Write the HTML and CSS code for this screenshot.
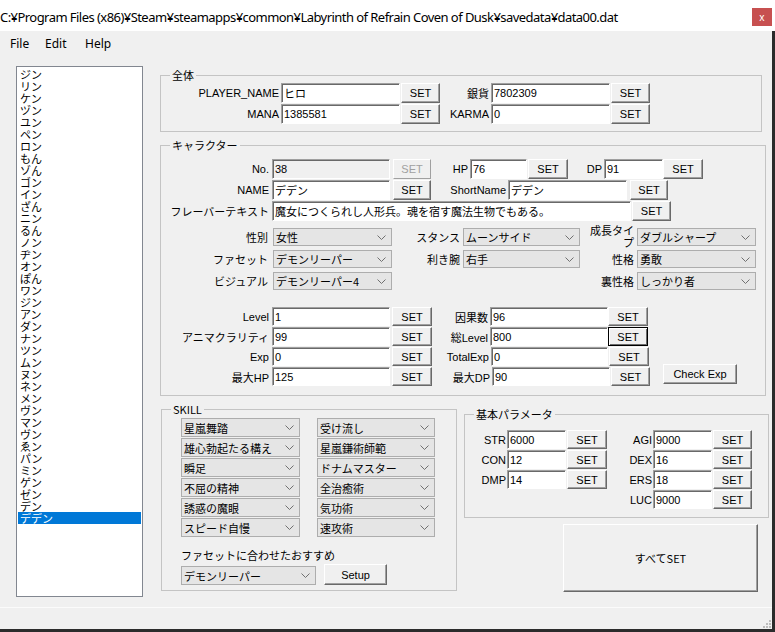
FILE: index.html
```html
<!DOCTYPE html>
<html lang="ja">
<head>
    <meta charset="UTF-8">
    <title>data00.dat</title>
    <link rel="stylesheet" href="styles.css">
</head>
<body>
    <div class="titlebar">
        <div class="title">C:¥Program Files (x86)¥Steam¥steamapps¥common¥Labyrinth of Refrain Coven of Dusk¥savedata¥data00.dat</div>
        <div class="close">x</div>
    </div>

    <div class="window">
        <div class="menubar">
            <span class="menu-file">File</span>
            <span class="menu-edit">Edit</span>
            <span>Help</span>
        </div>

        <div class="main">
            <!-- キャラ一覧 -->
            <div class="listbox">
                <div>ジン</div><div>リン</div><div>ケン</div><div>ヅン</div><div>ユン</div>
                <div>ペン</div><div>ロン</div><div>もん</div><div>ゾん</div><div>ゴン</div>
                <div>イン</div><div>ざん</div><div>ニン</div><div>るん</div><div>ノン</div>
                <div>ヂン</div><div>オン</div><div>ぽん</div><div>ワン</div><div>ジン</div>
                <div>アン</div><div>ダン</div><div>ナン</div><div>ツン</div><div>ムン</div>
                <div>ヌン</div><div>ネン</div><div>メン</div><div>ヴン</div><div>マン</div>
                <div>ヴン</div><div>ゑン</div><div>パン</div><div>ミン</div><div>ゲン</div>
                <div>ゼン</div><div>デン</div><div class="selected">デデン</div>
            </div>

            <div class="form">
                <!-- 全体 -->
                <div class="group group-all">
                    <span class="group-title">全体</span>
                    <div class="grid-all">
                        <span class="lbl">PLAYER_NAME</span>
                        <span class="tb">ヒロ</span>
                        <button class="btn ml1">SET</button>
                        <span class="lbl">銀貨</span>
                        <span class="tb">7802309</span>
                        <button class="btn ml1">SET</button>

                        <span class="lbl">MANA</span>
                        <span class="tb">1385581</span>
                        <button class="btn ml1">SET</button>
                        <span class="lbl">KARMA</span>
                        <span class="tb">0</span>
                        <button class="btn ml1">SET</button>
                    </div>
                </div>

                <!-- キャラクター -->
                <div class="group group-chara">
                    <span class="group-title">キャラクター</span>

                    <div class="row">
                        <span class="lbl w110">No.</span>
                        <span class="tb disabled w118 ml1">38</span>
                        <button class="btn w38 ml3" disabled>SET</button>
                        <span class="lbl w39">HP</span>
                        <span class="tb w57">76</span>
                        <button class="btn w40 ml1">SET</button>
                        <span class="lbl w36">DP</span>
                        <span class="tb w59">91</span>
                        <button class="btn w40">SET</button>
                    </div>
                    <div class="row">
                        <span class="lbl w110">NAME</span>
                        <span class="tb w118 ml1">デデン</span>
                        <button class="btn w38 ml3">SET</button>
                        <span class="lbl w77">ShortName</span>
                        <span class="tb w119">デデン</span>
                        <button class="btn w38 ml3">SET</button>
                    </div>
                    <div class="row">
                        <span class="lbl w110">フレーバーテキスト</span>
                        <span class="tb w359 ml1">魔女につくられし人形兵。魂を宿す魔法生物でもある。</span>
                        <button class="btn w39 ml1">SET</button>
                    </div>

                    <div class="grid-combo">
                        <span class="lbl">性別</span>
                        <span class="combo ml2">女性<svg viewBox="0 0 9 5"><polyline points="0.5,0.5 4.5,4.5 8.5,0.5"/></svg></span>
                        <span class="lbl">スタンス</span>
                        <span class="combo">ムーンサイド<svg viewBox="0 0 9 5"><polyline points="0.5,0.5 4.5,4.5 8.5,0.5"/></svg></span>
                        <span class="lbl wrap">成長タイプ</span>
                        <span class="combo">ダブルシャープ<svg viewBox="0 0 9 5"><polyline points="0.5,0.5 4.5,4.5 8.5,0.5"/></svg></span>

                        <span class="lbl">ファセット</span>
                        <span class="combo ml2">デモンリーパー<svg viewBox="0 0 9 5"><polyline points="0.5,0.5 4.5,4.5 8.5,0.5"/></svg></span>
                        <span class="lbl">利き腕</span>
                        <span class="combo">右手<svg viewBox="0 0 9 5"><polyline points="0.5,0.5 4.5,4.5 8.5,0.5"/></svg></span>
                        <span class="lbl">性格</span>
                        <span class="combo">勇敢<svg viewBox="0 0 9 5"><polyline points="0.5,0.5 4.5,4.5 8.5,0.5"/></svg></span>

                        <span class="lbl">ビジュアル</span>
                        <span class="combo ml2">デモンリーパー4<svg viewBox="0 0 9 5"><polyline points="0.5,0.5 4.5,4.5 8.5,0.5"/></svg></span>
                        <span></span>
                        <span></span>
                        <span class="lbl">裏性格</span>
                        <span class="combo">しっかり者<svg viewBox="0 0 9 5"><polyline points="0.5,0.5 4.5,4.5 8.5,0.5"/></svg></span>
                    </div>

                    <div class="stats">
                        <div class="row">
                            <span class="lbl w110">Level</span>
                            <span class="tb w118 ml1">1</span>
                            <button class="btn w40 ml2">SET</button>
                            <span class="lbl w58">因果数</span>
                            <span class="tb w118">96</span>
                            <button class="btn w40">SET</button>
                        </div>
                        <div class="row">
                            <span class="lbl w110">アニマクラリティ</span>
                            <span class="tb w118 ml1">99</span>
                            <button class="btn w40 ml2">SET</button>
                            <span class="lbl w58">総Level</span>
                            <span class="tb w118">800</span>
                            <button class="btn w40 focus">SET</button>
                        </div>
                        <div class="row">
                            <span class="lbl w110">Exp</span>
                            <span class="tb w118 ml1">0</span>
                            <button class="btn w40 ml2">SET</button>
                            <span class="lbl w59">TotalExp</span>
                            <span class="tb w117">0</span>
                            <button class="btn w40 ml1">SET</button>
                        </div>
                        <div class="row">
                            <span class="lbl w110">最大HP</span>
                            <span class="tb w118 ml1">125</span>
                            <button class="btn w40 ml2">SET</button>
                            <span class="lbl w60">最大DP</span>
                            <span class="tb w118">90</span>
                            <button class="btn w39 ml1">SET</button>
                            <button class="btn check">Check Exp</button>
                        </div>
                    </div>
                </div>

                <div class="lower">
                    <!-- SKILL -->
                    <div class="group group-skill">
                        <span class="group-title">SKILL</span>
                        <div class="grid-skill">
                            <span class="combo">星嵐舞踏<svg viewBox="0 0 9 5"><polyline points="0.5,0.5 4.5,4.5 8.5,0.5"/></svg></span>
                            <span class="combo">受け流し<svg viewBox="0 0 9 5"><polyline points="0.5,0.5 4.5,4.5 8.5,0.5"/></svg></span>
                            <span class="combo">雄心勃起たる構え<svg viewBox="0 0 9 5"><polyline points="0.5,0.5 4.5,4.5 8.5,0.5"/></svg></span>
                            <span class="combo">星嵐鎌術師範<svg viewBox="0 0 9 5"><polyline points="0.5,0.5 4.5,4.5 8.5,0.5"/></svg></span>
                            <span class="combo">瞬足<svg viewBox="0 0 9 5"><polyline points="0.5,0.5 4.5,4.5 8.5,0.5"/></svg></span>
                            <span class="combo">ドナムマスター<svg viewBox="0 0 9 5"><polyline points="0.5,0.5 4.5,4.5 8.5,0.5"/></svg></span>
                            <span class="combo">不屈の精神<svg viewBox="0 0 9 5"><polyline points="0.5,0.5 4.5,4.5 8.5,0.5"/></svg></span>
                            <span class="combo">全治癒術<svg viewBox="0 0 9 5"><polyline points="0.5,0.5 4.5,4.5 8.5,0.5"/></svg></span>
                            <span class="combo">誘惑の魔眼<svg viewBox="0 0 9 5"><polyline points="0.5,0.5 4.5,4.5 8.5,0.5"/></svg></span>
                            <span class="combo">気功術<svg viewBox="0 0 9 5"><polyline points="0.5,0.5 4.5,4.5 8.5,0.5"/></svg></span>
                            <span class="combo">スピード自慢<svg viewBox="0 0 9 5"><polyline points="0.5,0.5 4.5,4.5 8.5,0.5"/></svg></span>
                            <span class="combo">速攻術<svg viewBox="0 0 9 5"><polyline points="0.5,0.5 4.5,4.5 8.5,0.5"/></svg></span>
                        </div>
                        <div class="recommend-label">ファセットに合わせたおすすめ</div>
                        <div class="recommend">
                            <span class="combo">デモンリーパー<svg viewBox="0 0 9 5"><polyline points="0.5,0.5 4.5,4.5 8.5,0.5"/></svg></span>
                            <button class="btn setup">Setup</button>
                        </div>
                    </div>

                    <div class="side">
                        <!-- 基本パラメータ -->
                        <div class="group group-param">
                            <span class="group-title">基本パラメータ</span>
                            <div class="grid-param">
                                <span class="lbl">STR</span>
                                <span class="tb">6000</span>
                                <button class="btn ml1">SET</button>
                                <span class="lbl">AGI</span>
                                <span class="tb">9000</span>
                                <button class="btn ml1">SET</button>

                                <span class="lbl">CON</span>
                                <span class="tb">12</span>
                                <button class="btn ml1">SET</button>
                                <span class="lbl">DEX</span>
                                <span class="tb">16</span>
                                <button class="btn ml1">SET</button>

                                <span class="lbl">DMP</span>
                                <span class="tb">14</span>
                                <button class="btn ml1">SET</button>
                                <span class="lbl">ERS</span>
                                <span class="tb">18</span>
                                <button class="btn ml1">SET</button>

                                <span></span><span></span><span></span>
                                <span class="lbl">LUC</span>
                                <span class="tb">9000</span>
                                <button class="btn ml1">SET</button>
                            </div>
                        </div>
                        <button class="btn setall">すべてSET</button>
                    </div>
                </div>
            </div>
        </div>

        <div class="statusbar">
            <svg class="grip" viewBox="0 0 10 10">
                <rect x="8" y="2" width="2" height="2"/>
                <rect x="5" y="5" width="2" height="2"/><rect x="8" y="5" width="2" height="2"/>
                <rect x="2" y="8" width="2" height="2"/><rect x="5" y="8" width="2" height="2"/><rect x="8" y="8" width="2" height="2"/>
            </svg>
        </div>
    </div>
</body>
</html>
```

FILE: styles.css
```css
* {
    box-sizing: border-box;
}

body {
    margin: 0;
    width: 775px;
    height: 632px;
    overflow: hidden;
    background: #f0f0f0;
    color: #000;
    font-family: "Liberation Sans", "Noto Sans CJK JP", sans-serif;
    font-size: 11px;
}

/* タイトルバー */
.titlebar {
    height: 31px;
    background: #fff;
    display: flex;
    justify-content: space-between;
    align-items: center;
    padding-top: 3px;
    font-family: "Noto Sans", "Noto Sans CJK JP", sans-serif;
    font-size: 13px;
    letter-spacing: -0.55px;
}

.close {
    width: 20px;
    height: 18px;
    margin-right: 3px;
    background: #c75050;
    color: #fff;
    font-size: 10px;
    letter-spacing: 0;
    display: flex;
    align-items: center;
    justify-content: center;
}

.window {
    height: 601px;
    display: flex;
    flex-direction: column;
    border-right: 3px solid #2b2b2b;
    border-bottom: 3px solid #2b2b2b;
}

.menubar {
    height: 27px;
    display: flex;
    align-items: center;
    padding-left: 10px;
    padding-bottom: 2px;
    font-family: "Noto Sans", sans-serif;
    font-size: 12px;
}

.menu-file { width: 35px; }
.menu-edit { width: 40px; }

.main {
    display: flex;
    height: 549px;
    padding: 8px 0 0 16px;
}

/* リスト */
.listbox {
    width: 127px;
    height: 531px;
    background: #fff;
    border: 1px solid #828790;
    padding: 1px;
    font-family: "Noto Sans CJK JP", sans-serif;
    font-size: 11px;
    line-height: 12px;
}

.listbox div {
    height: 12px;
    padding-left: 2px;
    white-space: nowrap;
}

.listbox .selected {
    background: #0078d7;
    color: #fff;
}

.form {
    margin-left: 17px;
    display: flex;
    flex-direction: column;
}

/* グループボックス */
.group {
    position: relative;
    border: 1px solid #c4c4c4;
}

.group-title {
    position: absolute;
    top: -8px;
    left: 9px;
    padding: 0 2px;
    line-height: 14px;
    background: #f0f0f0;
    font-family: "Noto Sans CJK JP", sans-serif;
}

.group-all {
    margin-top: 9px;
    width: 602px;
    height: 57px;
    padding-top: 7px;
}

.grid-all {
    display: grid;
    grid-template-columns: 120px 119px 40px 51px 119px 40px;
    grid-auto-rows: 20px;
    row-gap: 1px;
}

.group-chara {
    margin-top: 13px;
    width: 606px;
    height: 251px;
    padding-top: 13px;
}

.row {
    display: flex;
    height: 20px;
    margin-bottom: 1px;
}

.grid-combo {
    display: grid;
    grid-template-columns: 110px 121px 71px 117px 57px 119px;
    grid-auto-rows: 18px;
    row-gap: 4px;
    margin-top: 7px;
}

.stats {
    margin-top: 17px;
}

.stats .row {
    height: 19px;
}

/* 共通パーツ */
.lbl {
    display: flex;
    align-items: center;
    justify-content: flex-end;
    padding-right: 2px;
    white-space: nowrap;
    flex: none;
}

.lbl.wrap {
    white-space: normal;
    text-align: right;
    line-height: 12px;
    padding-right: 3px;
}

.grid-combo .lbl {
    padding-right: 3px;
}

.tb {
    display: flex;
    align-items: center;
    flex: none;
    background: #fff;
    border: 1px solid;
    border-color: #a0a0a0 #fff #fff #a0a0a0;
    box-shadow: inset 1px 1px #696969;
    padding-left: 2px;
    white-space: nowrap;
    overflow: hidden;
}

.tb.disabled {
    background: #f0f0f0;
}

.btn {
    flex: none;
    margin: 0;
    padding: 0;
    background: #f0f0f0;
    border: 1px solid;
    border-color: #fff #696969 #696969 #fff;
    box-shadow: inset -1px -1px #a0a0a0;
    font-family: "Liberation Sans", "Noto Sans CJK JP", sans-serif;
    font-size: 11px;
    color: #000;
}

.btn:disabled {
    color: #a0a0a0;
    border-color: #fff #a0a0a0 #a0a0a0 #fff;
    box-shadow: none;
}

.btn.focus {
    border-color: #000;
    box-shadow: inset 1px 1px #fff, inset -1px -1px #696969;
}

.combo {
    display: flex;
    align-items: center;
    justify-content: space-between;
    flex: none;
    background: #e5e5e5;
    border: 1px solid #adadad;
    padding-left: 2px;
    padding-right: 5px;
    font-family: "Noto Sans CJK JP", sans-serif;
    white-space: nowrap;
}

.combo svg {
    width: 9px;
    height: 5px;
    fill: none;
    stroke: #707070;
    stroke-width: 1;
}

.check {
    width: 74px;
    height: 20px;
    margin-left: 13px;
    margin-top: -3px;
}

.w36 { width: 36px; }
.w38 { width: 38px; }
.w39 { width: 39px; }
.w40 { width: 40px; }
.w57 { width: 57px; }
.w58 { width: 58px; }
.w59 { width: 59px; }
.w60 { width: 60px; }
.w77 { width: 77px; }
.w110 { width: 110px; }
.w117 { width: 117px; }
.w118 { width: 118px; }
.w119 { width: 119px; }
.w359 { width: 359px; }
.ml1 { margin-left: 1px; }
.ml2 { margin-left: 2px; }
.ml3 { margin-left: 3px; }

/* 下段 */
.lower {
    display: flex;
    align-items: flex-start;
    margin-top: 13px;
}

.group-skill {
    margin-left: 1px;
    width: 296px;
    height: 182px;
    padding: 8px 0 0 19px;
}

.grid-skill {
    display: grid;
    grid-template-columns: 119px 118px;
    column-gap: 17px;
    grid-auto-rows: 19px;
    row-gap: 1px;
}

.recommend-label {
    margin-top: 12px;
    line-height: 12px;
    font-family: "Noto Sans CJK JP", sans-serif;
}

.recommend {
    display: flex;
    align-items: flex-end;
    margin-top: 3px;
}

.recommend .combo {
    width: 135px;
    height: 19px;
}

.setup {
    width: 63px;
    height: 21px;
    margin-left: 8px;
}

.side {
    display: flex;
    flex-direction: column;
    margin-left: 7px;
    margin-top: 5px;
}

.group-param {
    width: 305px;
    height: 104px;
    padding-top: 15px;
}

.grid-param {
    display: grid;
    grid-template-columns: 42px 59px 41px 46px 59px 40px;
    grid-auto-rows: 19px;
    row-gap: 1px;
}

.grid-param .lbl {
    padding-right: 1px;
}

.setall {
    width: 195px;
    height: 68px;
    margin: 6px 0 0 99px;
    font-family: "Noto Sans CJK JP", sans-serif;
}

/* ステータスバー */
.statusbar {
    flex: 1;
    border-top: 1px solid #fbfbfb;
    display: flex;
    justify-content: flex-end;
    align-items: flex-end;
    padding: 0 1px 1px 0;
}

.grip {
    width: 10px;
    height: 10px;
    fill: #bcbcbc;
}
```
